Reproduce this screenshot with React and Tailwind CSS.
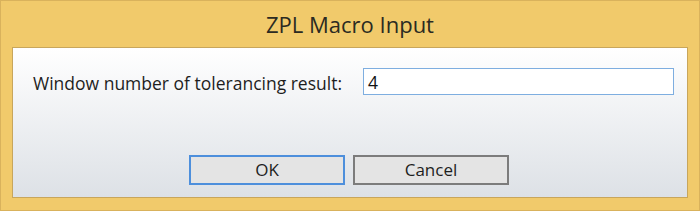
export default function App() {
  return (
    <div className="w-[700px] h-[211px] bg-[#f1ca6b] border border-[#d9b25c] flex flex-col" style={{ fontFamily: '"Open Sans", "Noto Sans", sans-serif' }}>
      <div className="h-[46px] flex items-center justify-center text-[22px] text-[#2b2a22]">ZPL Macro Input</div>
      <div className="mx-[11px] mb-[12px] flex-1 border border-[#c8a65c] bg-gradient-to-b from-white to-[#dde1e6] flex flex-col">
        <div className="flex items-center mt-[19px] pl-[20px] pr-[13px]">
          <span className="text-[17.5px] text-[#1e1e1e] w-[330px] pt-[3px]">Window number of tolerancing result:</span>
          <div className="flex-1 h-[27px] border border-[#7eaee0] bg-white flex items-center pl-[4px] text-[17.5px] text-[#111]">4</div>
        </div>
        <div className="flex gap-[8px] pl-[176px] mt-auto mb-[12px]">
          <button className="w-[156px] h-[30px] border-2 border-[#4d8fdc] bg-[#e4e4e4] text-[17px] text-[#1e1e1e]">OK</button>
          <button className="w-[156px] h-[30px] border-2 border-[#7c7c7c] bg-[#e4e4e4] text-[17px] text-[#1e1e1e]">Cancel</button>
        </div>
      </div>
    </div>
  );
}
